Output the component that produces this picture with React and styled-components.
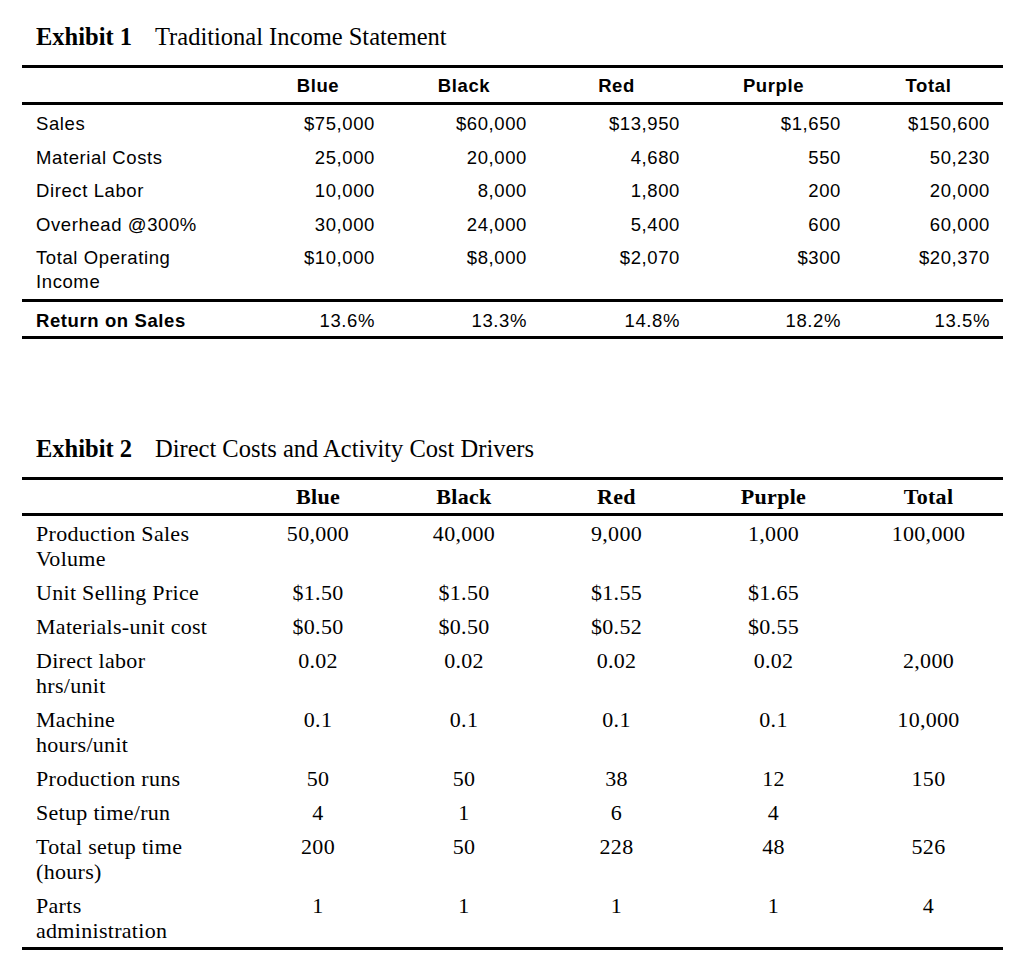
import styled, { createGlobalStyle } from "styled-components";

const GlobalStyle = createGlobalStyle`
  body {
    margin: 0;
    background: #fff;
    color: #000;
  }
`;

const Page = styled.div`
  width: 1024px;
  box-sizing: border-box;
  padding: 22px 21px 20px 22px;
`;

const Exhibit = styled.section`
  & + & {
    margin-top: 95px;
  }
`;

const Title = styled.h2`
  margin: 0 0 13px;
  padding-left: 14px;
  font: 400 24.5px/30px "Liberation Serif", "Times New Roman", serif;
`;

const TitleNum = styled.span`
  display: inline-block;
  width: 119px;
  font-weight: 700;
`;

const Table = styled.table`
  width: 100%;
  table-layout: fixed;
  border-collapse: collapse;
  border-top: 3px solid #000;
  border-bottom: 3px solid #000;
  font-family: ${(p) =>
    p.$serif
      ? `"Liberation Serif", "Times New Roman", serif`
      : `"Liberation Sans", Arial, sans-serif`};
  font-size: ${(p) => (p.$serif ? "22px" : "18.5px")};
  letter-spacing: ${(p) => (p.$serif ? "0.3px" : "0.6px")};
  color: #000;
`;

const Col = styled.col`
  width: ${(p) => p.$w}px;
`;

const Head = styled.th`
  font-weight: 700;
  text-align: center;
  border-bottom: 3px solid #000;
  padding: ${(p) => (p.$serif ? "4px 0 4px" : "6px 0 4px")};
  line-height: ${(p) => (p.$serif ? "25px" : "24px")};
`;

const Body = styled.tbody`
  tr:last-child td {
    padding-bottom: ${(p) => (p.$serif ? "4.5px" : "5px")};
  }
`;

const Foot = styled.tfoot`
  td {
    border-top: 3px solid #000;
    padding: 7px 13px 3px 14px;
  }
`;

const Label = styled.td`
  text-align: left;
  vertical-align: top;
  white-space: pre-line;
  font-weight: ${(p) => (p.$bold ? 700 : 400)};
  padding: ${(p) => (p.$serif ? "4.5px 8px 4.5px 14px" : "7px 8px 2.5px 14px")};
  line-height: ${(p) => (p.$serif ? "25px" : "24px")};
`;

const Num = styled.td`
  vertical-align: top;
  text-align: ${(p) => (p.$serif ? "center" : "right")};
  padding: ${(p) => (p.$serif ? "4.5px 4px" : "7px 13px 2.5px 4px")};
  line-height: ${(p) => (p.$serif ? "25px" : "24px")};
`;

const columns = ["Blue", "Black", "Red", "Purple", "Total"];
const widths = [226, 140, 152, 153, 161, 149];

const income = [
  ["Sales", "$75,000", "$60,000", "$13,950", "$1,650", "$150,600"],
  ["Material Costs", "25,000", "20,000", "4,680", "550", "50,230"],
  ["Direct Labor", "10,000", "8,000", "1,800", "200", "20,000"],
  ["Overhead @300%", "30,000", "24,000", "5,400", "600", "60,000"],
  ["Total Operating\nIncome", "$10,000", "$8,000", "$2,070", "$300", "$20,370"],
];

const returnOnSales = ["Return on Sales", "13.6%", "13.3%", "14.8%", "18.2%", "13.5%"];

const drivers = [
  ["Production Sales\nVolume", "50,000", "40,000", "9,000", "1,000", "100,000"],
  ["Unit Selling Price", "$1.50", "$1.50", "$1.55", "$1.65", ""],
  ["Materials-unit cost", "$0.50", "$0.50", "$0.52", "$0.55", ""],
  ["Direct labor\nhrs/unit", "0.02", "0.02", "0.02", "0.02", "2,000"],
  ["Machine\nhours/unit", "0.1", "0.1", "0.1", "0.1", "10,000"],
  ["Production runs", "50", "50", "38", "12", "150"],
  ["Setup time/run", "4", "1", "6", "4", ""],
  ["Total setup time\n(hours)", "200", "50", "228", "48", "526"],
  ["Parts\nadministration", "1", "1", "1", "1", "4"],
];

function Row({ cells, serif, bold }) {
  const [label, ...values] = cells;
  return (
    <tr>
      <Label $serif={serif} $bold={bold}>{label}</Label>
      {values.map((v, i) => (
        <Num key={i} $serif={serif}>{v}</Num>
      ))}
    </tr>
  );
}

function ExhibitTable({ serif, rows, footer }) {
  return (
    <Table $serif={serif}>
      <colgroup>
        {widths.map((w, i) => (
          <Col key={i} $w={w} />
        ))}
      </colgroup>
      <thead>
        <tr>
          <Head $serif={serif} />
          {columns.map((c) => (
            <Head key={c} $serif={serif}>{c}</Head>
          ))}
        </tr>
      </thead>
      <Body $serif={serif}>
        {rows.map((r) => (
          <Row key={r[0]} cells={r} serif={serif} />
        ))}
      </Body>
      {footer && (
        <Foot>
          <Row cells={footer} bold />
        </Foot>
      )}
    </Table>
  );
}

export default function App() {
  return (
    <Page>
      <GlobalStyle />
      <Exhibit>
        <Title>
          <TitleNum>Exhibit 1</TitleNum>Traditional Income Statement
        </Title>
        <ExhibitTable rows={income} footer={returnOnSales} />
      </Exhibit>
      <Exhibit>
        <Title>
          <TitleNum>Exhibit 2</TitleNum>Direct Costs and Activity Cost Drivers
        </Title>
        <ExhibitTable serif rows={drivers} />
      </Exhibit>
    </Page>
  );
}
